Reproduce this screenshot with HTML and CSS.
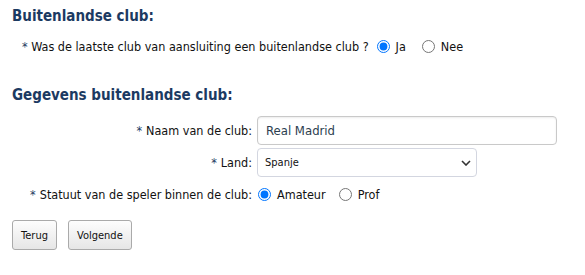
FILE: index.html
```html
<!DOCTYPE html>
<html>
<head>
<meta charset="utf-8">
<link rel="stylesheet" href="styles.css">
</head>
<body>
<div class="page">
  <h2 class="heading">Buitenlandse club:</h2>
  <div class="question">
    <span class="qtext"><span class="req">*</span> Was de laatste club van aansluiting een buitenlandse club ?</span>
    <label class="opt"><input type="radio" name="q" checked> Ja</label>
    <label class="opt"><input type="radio" name="q"> Nee</label>
  </div>

  <h2 class="heading second">Gegevens buitenlandse club:</h2>
  <div class="form">
    <div class="label"><span class="req">*</span> Naam van de club:</div>
    <div class="field"><input class="text" type="text" value="Real Madrid"></div>

    <div class="label"><span class="req">*</span> Land:</div>
    <div class="field">
      <div class="select-wrap">
        <select class="select"><option>Spanje</option></select>
        <svg class="chev" width="10" height="6" viewBox="0 0 10 6"><path d="M1 1 L5 5 L9 1" fill="none" stroke="#333" stroke-width="1.6"/></svg>
      </div>
    </div>

    <div class="label"><span class="req">*</span> Statuut van de speler binnen de club:</div>
    <div class="field radios">
      <label class="opt"><input type="radio" name="s" checked> Amateur</label>
      <label class="opt"><input type="radio" name="s"> Prof</label>
    </div>
  </div>

  <div class="buttons">
    <button class="btn">Terug</button>
    <button class="btn">Volgende</button>
  </div>
</div>
</body>
</html>
```

FILE: styles.css
```css
html, body {
  margin: 0;
  padding: 0;
  background: #fff;
}
body {
  font-family: "DejaVu Sans Condensed", "DejaVu Sans", sans-serif;
  font-size: 12.5px;
  color: #111;
}
.page {
  padding: 7px 12px 0 12px;
}
.heading {
  margin: 0;
  font-size: 15px;
  font-weight: bold;
  color: #1c3a62;
  line-height: 18px;
}
.heading.second {
  margin-top: 30px;
}
.req {
  color: #1c3a62;
}
.question {
  margin-top: 11px;
  margin-left: 10px;
  display: flex;
  align-items: center;
  height: 20px;
  white-space: nowrap;
}
.opt {
  display: inline-flex;
  align-items: center;
  margin-left: 8px;
}
.opt input {
  margin: 0 6px 0 0;
  width: 13px;
  height: 13px;
}
.opt + .opt {
  margin-left: 16px;
}
.form {
  margin-top: 12px;
  display: grid;
  grid-template-columns: 240px auto;
  column-gap: 5px;
  row-gap: 3px;
}
.label {
  text-align: right;
  display: flex;
  justify-content: flex-end;
  align-items: center;
  white-space: nowrap;
  gap: 4px;
}
.field {
  display: flex;
  align-items: center;
}
.text {
  box-sizing: border-box;
  width: 300px;
  height: 29px;
  border: 1px solid #c9c9c9;
  border-radius: 4px;
  padding: 0 8px;
  font-family: inherit;
  font-size: 13px;
  color: #2c3e50;
  box-shadow: inset 0 1px 2px rgba(0,0,0,0.08);
  outline: none;
}
.select-wrap {
  position: relative;
  display: flex;
}
.select {
  box-sizing: border-box;
  width: 220px;
  height: 29px;
  border: 1px solid #d3d6e0;
  border-radius: 4px;
  padding: 0 20px 0 7px;
  font-family: inherit;
  font-size: 11px;
  color: #111;
  background: #fff;
  appearance: none;
  -webkit-appearance: none;
}
.chev {
  position: absolute;
  right: 6px;
  top: 12px;
  pointer-events: none;
}
.radios {
  height: 28px;
}
.radios .opt {
  margin-left: 1px;
}
.radios .opt + .opt {
  margin-left: 13px;
}
.buttons {
  margin-top: 12px;
  display: flex;
  gap: 11px;
}
.btn {
  height: 30px;
  min-width: 45px;
  padding: 0 8px;
  font-family: inherit;
  font-size: 11px;
  color: #111;
  border: 1px solid #aaa;
  border-radius: 3px;
  background: linear-gradient(#fdfdfd, #e6e6e6);
}
```
